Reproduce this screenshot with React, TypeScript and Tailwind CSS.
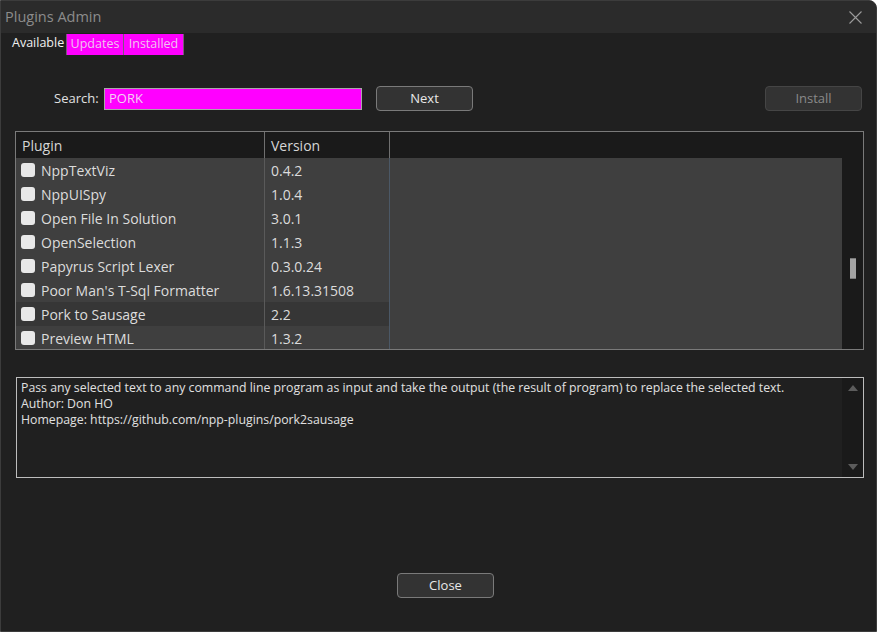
interface PluginRow {
  name: string;
  version: string;
  selected?: boolean;
}

const plugins: PluginRow[] = [
  { name: 'NppTextViz', version: '0.4.2' },
  { name: 'NppUISpy', version: '1.0.4' },
  { name: 'Open File In Solution', version: '3.0.1' },
  { name: 'OpenSelection', version: '1.1.3' },
  { name: 'Papyrus Script Lexer', version: '0.3.0.24' },
  { name: "Poor Man's T-Sql Formatter", version: '1.6.13.31508' },
  { name: 'Pork to Sausage', version: '2.2', selected: true },
  { name: 'Preview HTML', version: '1.3.2' },
];

function DlgButton({ label, disabled = false, className = '' }: { label: string; disabled?: boolean; className?: string }) {
  return (
    <button
      type="button"
      className={`h-[25px] w-[97px] shrink-0 rounded-[4px] border bg-[#333333] text-[13px] ${
        disabled ? 'border-[#454545] text-[#8a8a8a]' : 'border-[#7a7a7a] text-[#e8e8e8]'
      } ${className}`}
    >
      {label}
    </button>
  );
}

export default function App() {
  return (
    <div className="flex h-[632px] w-[877px] flex-col overflow-hidden rounded-tr-[8px] border border-[#3c3c3c] bg-[#202020] font-['Open_Sans','Noto_Sans',sans-serif] text-[#dcdcdc]">
      {/* title bar */}
      <div className="flex h-[32px] shrink-0 items-center justify-between bg-[#2b2b2b] pl-[4px] pr-[14px]">
        <span className="text-[14.5px] text-[#8c8c8c]">Plugins Admin</span>
        <svg width="13" height="13" viewBox="0 0 13 13" className="text-[#9a9a9a]" aria-hidden>
          <path d="M0.5 0.5 L12.5 12.5 M12.5 0.5 L0.5 12.5" stroke="currentColor" strokeWidth="1.1" fill="none" />
        </svg>
      </div>

      {/* tabs */}
      <div className="mt-[1px] flex h-[21px] items-center pl-[11px] text-[12.5px]">
        <span className="w-[54px] self-start leading-[17px] text-[#f0f0f0]">Available</span>
        <span className="flex h-[21px] w-[58px] items-center justify-center border-l border-r border-[#7a5a7a] bg-[#ff00ff] text-[#f0c4f0]">
          Updates
        </span>
        <span className="flex h-[21px] w-[60px] items-center justify-center border-r border-[#7a5a7a] bg-[#ff00ff] text-[#f0c4f0]">
          Installed
        </span>
      </div>

      {/* search row */}
      <div className="mt-[31px] flex h-[25px] items-center">
        <span className="ml-[53px] w-[46px] text-[13px] text-[#e0e0e0]">Search:</span>
        <div className="ml-[4px] flex h-[22px] w-[258px] items-center border border-[#a8a8a8] bg-[#ff00ff] pl-[4px] text-[13px] text-[#f4d0f4]">
          PORK
        </div>
        <DlgButton label="Next" className="ml-[14px]" />
        <div className="flex-1" />
        <DlgButton label="Install" disabled className="mr-[14px]" />
      </div>

      {/* plugin list */}
      <div className="ml-[14px] mt-[20px] flex h-[219px] w-[849px] flex-col border border-[#7a7a7a] bg-[#1a1a1a]">
        <div className="flex h-[26px] shrink-0 items-center text-[14px] text-[#d6d6d6]">
          <div className="flex h-full w-[249px] items-center border-r border-[#707070] pl-[6px]">Plugin</div>
          <div className="flex h-full w-[125px] items-center border-r border-[#707070] pl-[6px]">Version</div>
        </div>
        <div className="flex min-h-0 flex-1">
          <div className="relative w-[826px] overflow-hidden bg-[#3f3f3f]">
            {plugins.map((p) => (
              <div key={p.name} className="flex h-[24px] items-center text-[14px]">
                <div
                  className={`flex h-full w-[249px] items-center border-r border-[#5a5a5a] pl-[5px] ${
                    p.selected ? 'bg-[#363636]' : ''
                  }`}
                >
                  <span className="mr-[6px] h-[14px] w-[14px] shrink-0 rounded-[3px] bg-[#e8e8e8]" />
                  <span className="whitespace-nowrap">{p.name}</span>
                </div>
                <div
                  className={`flex h-full w-[125px] items-center border-r border-[#4b5866] pl-[6px] ${
                    p.selected ? 'bg-[#363636]' : ''
                  }`}
                >
                  {p.version}
                </div>
              </div>
            ))}
          </div>
          <div className="flex w-[20px] flex-col bg-[#1a1a1a] pl-[8px]">
            <div className="mt-[100px] h-[21px] w-[6px] border-y border-[#7a7a7a] bg-[#a3a3a3]" />
          </div>
        </div>
      </div>

      {/* description */}
      <div className="ml-[15px] mt-[27px] flex h-[101px] w-[848px] border border-[#bdbdbd] bg-[#202020]">
        <div className="flex-1 px-[4px] pt-[2px] text-[12.3px] leading-[16px] text-[#e0e0e0]">
          <div className="whitespace-nowrap">
            Pass any selected text to any command line program as input and take the output (the result of program) to replace the selected text.
          </div>
          <div>Author: Don HO</div>
          <div>Homepage: https://github.com/npp-plugins/pork2sausage</div>
        </div>
        <div className="flex w-[21px] flex-col items-center justify-between bg-[#1a1a1a] py-[7px] text-[#5c5c5c]">
          <svg width="10" height="6" viewBox="0 0 10 6" aria-hidden>
            <path d="M5 0 L10 6 L0 6 Z" fill="currentColor" />
          </svg>
          <svg width="10" height="6" viewBox="0 0 10 6" aria-hidden>
            <path d="M0 0 L10 0 L5 6 Z" fill="currentColor" />
          </svg>
        </div>
      </div>

      <div className="mt-[95px] flex">
        <DlgButton label="Close" className="ml-[396px]" />
      </div>
    </div>
  );
}
